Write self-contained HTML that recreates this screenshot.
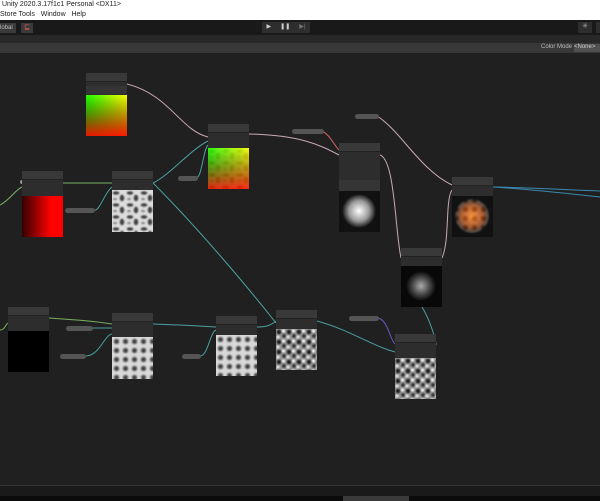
<!DOCTYPE html>
<html><head><style>
*{margin:0;padding:0;box-sizing:border-box}
body{width:600px;height:500px;overflow:hidden;background:#202020;font-family:"Liberation Sans",sans-serif;position:relative}
.t{position:absolute;left:0;top:0;width:600px;height:20px;background:#fff;color:#222;font-size:7px}
.tb{position:absolute;left:0;top:20px;width:600px;height:15px;background:#191919}
.b2{position:absolute;left:0;top:35px;width:600px;height:8px;background:#282828}
.b3{position:absolute;left:0;top:43px;width:600px;height:10px;background:#383838}
.n{position:absolute;background:#2d2d2d}
.n .h{height:9px;background:#393939;border-bottom:1px solid #222}
.n .p{position:absolute;left:0;right:0;bottom:0;overflow:hidden}
.bot{position:absolute;left:0;top:485px;width:600px;height:15px;background:#1a1a1a;border-top:1px solid #353535}
</style></head><body>
<div class="t"><div style="position:absolute;left:2px;top:1px">Unity 2020.3.17f1c1 Personal &lt;DX11&gt;</div><div style="position:absolute;left:0;top:11px">Store Tools&nbsp;&nbsp;&nbsp;Window&nbsp;&nbsp;&nbsp;Help</div></div>
<div class="tb">
<div style="position:absolute;left:0;top:3px;width:16px;height:10px;background:#3a3a3a;color:#bbb;font-size:6px;line-height:10px">lobal</div>
<div style="position:absolute;left:21px;top:3px;width:12px;height:10px;background:#3a3a3a;color:#e55;font-size:7px;line-height:10px;text-align:center">⊑</div>
<div style="position:absolute;left:262px;top:2px;width:48px;height:11px;background:#2e2e2e;color:#ccc;font-size:6px;line-height:11px;display:flex;justify-content:space-around"><span>▶</span><span>❚❚</span><span style="color:#777">▶|</span></div>
<div style="position:absolute;left:578px;top:2px;width:14px;height:11px;background:#2e2e2e;color:#aaa;font-size:7px;text-align:center">✳</div>
<div style="position:absolute;left:596px;top:2px;width:4px;height:11px;background:#2e2e2e"></div>
</div>
<div class="b2"></div>
<div class="b3"><div style="position:absolute;right:28px;top:1px;color:#bbb;font-size:6px">Color Mode</div><div style="position:absolute;right:0;top:1px;width:26px;height:8px;background:#505050;color:#ccc;font-size:6px">&lt;None&gt;</div></div>
<div class="bot"><div style="position:absolute;left:0;top:10px;width:600px;height:5px;background:#0b0b0b"></div><div style="position:absolute;left:343px;top:10px;width:66px;height:5px;background:#3a3a3a"></div></div>
<svg style="position:absolute;left:0;top:0" width="600" height="500">
<defs>
<filter id="bl"><feGaussianBlur stdDeviation="0.9"/></filter>
<radialGradient id="wg"><stop offset="0" stop-color="#fff"/><stop offset=".6" stop-color="#999"/><stop offset="1" stop-color="#111"/></radialGradient>
<radialGradient id="og"><stop offset="0" stop-color="#ff7a10"/><stop offset=".6" stop-color="#a33a00"/><stop offset="1" stop-color="#111"/></radialGradient>
<radialGradient id="gg"><stop offset="0" stop-color="#aaa"/><stop offset=".6" stop-color="#444"/><stop offset="1" stop-color="#080808"/></radialGradient>
<pattern id="vor" width="9" height="9" patternUnits="userSpaceOnUse"><rect width="9" height="9" fill="#d8d8d8"/><circle cx="4.5" cy="4.5" r="3" fill="#666"/><circle cx="4.5" cy="4.5" r="1.3" fill="#222"/></pattern>
<pattern id="noi" width="14" height="12" patternUnits="userSpaceOnUse"><rect width="14" height="12" fill="#ddd"/><ellipse cx="4" cy="3" rx="3.5" ry="2" fill="#444"/><ellipse cx="10" cy="8" rx="2.5" ry="3.5" fill="#444"/><ellipse cx="3" cy="9" rx="2" ry="1.3" fill="#888"/></pattern>
<pattern id="mix" width="10" height="10" patternUnits="userSpaceOnUse"><rect width="10" height="10" fill="#999"/><circle cx="3" cy="3" r="2.6" fill="#222"/><circle cx="8" cy="7" r="2.2" fill="#333"/><circle cx="7.5" cy="2" r="1.4" fill="#fff"/><circle cx="2" cy="8" r="1.4" fill="#eee"/></pattern>
<linearGradient id="gy" x1="0" y1="0" x2="1" y2="0"><stop offset="0" stop-color="#2f0"/><stop offset="1" stop-color="#ff0"/></linearGradient>
<linearGradient id="rd" x1="0" y1="0" x2="0" y2="1"><stop offset="0" stop-color="#000" stop-opacity="0"/><stop offset="1" stop-color="#f00" stop-opacity=".9"/></linearGradient>
</defs>
<g fill="none" stroke-width="1">
<path d="M127 84 C170 95 180 130 208 137" stroke="#c8a8b8"/>
<path d="M249 134 C300 135 320 145 339 155" stroke="#c8a8b8"/>
<path d="M377 116 C400 130 420 170 452 185" stroke="#c8a8b8"/>
<path d="M380 155 C395 160 395 230 401 258" stroke="#c8a8b8"/>
<path d="M442 258 C450 240 445 200 452 190" stroke="#c8a8b8"/>
<path d="M322 131 C330 135 334 145 339 150" stroke="#d06060"/>
<path d="M63 183 C90 183 100 183 112 183" stroke="#7ab060"/>
<path d="M0 205 C10 200 15 190 22 187" stroke="#7ab060"/>
<path d="M153 183 C170 175 190 150 208 141" stroke="#4aa0a0"/>
<path d="M153 183 C200 230 250 290 276 323" stroke="#4aa0a0"/>
<path d="M95 210 C100 210 105 192 112 187" stroke="#4aa0a0"/>
<path d="M196 178 C202 178 203 150 208 145" stroke="#4aa0a0"/>
<path d="M493 187 C540 188 570 190 600 191" stroke="#3a8ab0"/>
<path d="M493 187 C540 190 570 194 600 197" stroke="#3a8ab0"/>
<path d="M49 318 C80 320 100 322 112 324" stroke="#7ab060"/>
<path d="M0 330 C5 330 5 325 8 323" stroke="#7ab060"/>
<path d="M153 324 C180 325 200 326 216 327" stroke="#4aa0a0"/>
<path d="M257 327 C265 327 270 326 276 321" stroke="#4aa0a0"/>
<path d="M317 321 C350 330 370 345 395 352" stroke="#4aa0a0"/>
<path d="M422 307 C430 320 436 340 436 345" stroke="#4aa0a0"/>
<path d="M85 356 C100 356 104 335 112 334" stroke="#4aa0a0"/>
<path d="M200 356 C208 356 210 332 216 330" stroke="#4aa0a0"/>
<path d="M92 328 C100 328 105 328 112 328" stroke="#4aa0a0"/>
<path d="M378 318 C388 320 390 340 395 344" stroke="#6a5ad0"/>
</g>
<g fill="#555">
<rect x="292" y="129" width="32" height="5" rx="2.5"/>
<rect x="355" y="114" width="24" height="5" rx="2.5"/>
<rect x="178" y="176" width="20" height="5" rx="2.5"/>
<rect x="65" y="208" width="30" height="5" rx="2.5"/>
<rect x="66" y="326" width="27" height="5" rx="2.5"/>
<rect x="60" y="354" width="26" height="5" rx="2.5"/>
<rect x="182" y="354" width="19" height="5" rx="2.5"/>
<rect x="349" y="316" width="30" height="5" rx="2.5"/>
<rect x="20" y="180" width="10" height="4" rx="2" fill="#999"/>
</g>
</svg>
<div class="n" style="left:86px;top:73px;width:41px;height:63px"><div class="h"></div><div style="height:8px;background:#353535;margin-top:4px"></div><div class="p" style="height:41px"><svg width="41" height="41"><rect width="41" height="41" fill="url(#gy)"/><rect width="41" height="41" fill="url(#rd)"/></svg></div></div>
<div class="n" style="left:208px;top:124px;width:41px;height:65px"><div class="h"></div><div class="p" style="height:41px"><svg width="41" height="41"><rect width="41" height="41" fill="url(#gy)"/><rect width="41" height="41" fill="url(#rd)"/><rect width="41" height="41" fill="url(#noi)" opacity=".1" filter="url(#bl)"/></svg></div></div>
<div class="n" style="left:22px;top:171px;width:41px;height:66px"><div class="h"></div><div class="p" style="height:41px;background:linear-gradient(90deg,#300,#f00 70%)"></div></div>
<div class="n" style="left:112px;top:171px;width:41px;height:61px"><div class="h"></div><div class="p" style="height:42px"><svg width="41" height="42"><rect x="-3" y="-3" width="47" height="48" fill="url(#noi)" filter="url(#bl)"/></svg></div></div>
<div class="n" style="left:339px;top:143px;width:41px;height:89px"><div class="h"></div><div style="position:absolute;left:0;right:0;top:37px;height:11px;background:#353535"></div><div class="p" style="height:41px;background:#111"><svg width="41" height="41"><circle cx="20" cy="20" r="17" fill="url(#wg)"/></svg></div></div>
<div class="n" style="left:452px;top:177px;width:41px;height:60px"><div class="h"></div><div class="p" style="height:41px;background:#111"><svg width="41" height="41"><circle cx="20" cy="20" r="17" fill="url(#og)"/><circle cx="20" cy="20" r="17" fill="url(#vor)" opacity=".25" filter="url(#bl)"/></svg></div></div>
<div class="n" style="left:401px;top:248px;width:41px;height:59px"><div class="h"></div><div class="p" style="height:41px;background:#080808"><svg width="41" height="41"><circle cx="20" cy="20" r="15" fill="url(#gg)"/></svg></div></div>
<div class="n" style="left:8px;top:307px;width:41px;height:65px"><div class="h"></div><div class="p" style="height:41px;background:#000"></div></div>
<div class="n" style="left:112px;top:313px;width:41px;height:66px"><div class="h"></div><div class="p" style="height:42px"><svg width="41" height="42"><rect x="-3" y="-3" width="47" height="48" fill="url(#vor)" filter="url(#bl)"/></svg></div></div>
<div class="n" style="left:216px;top:316px;width:41px;height:60px"><div class="h"></div><div class="p" style="height:41px"><svg width="41" height="41"><rect x="-3" y="-3" width="47" height="47" fill="url(#vor)" filter="url(#bl)"/></svg></div></div>
<div class="n" style="left:276px;top:310px;width:41px;height:60px"><div class="h"></div><div class="p" style="height:41px"><svg width="41" height="41"><rect x="-3" y="-3" width="47" height="47" fill="url(#mix)" filter="url(#bl)"/></svg></div></div>
<div class="n" style="left:395px;top:334px;width:41px;height:65px"><div class="h"></div><div class="p" style="height:41px"><svg width="41" height="41"><rect x="-3" y="-3" width="47" height="47" fill="url(#mix)" filter="url(#bl)"/></svg></div></div>
</body></html>
